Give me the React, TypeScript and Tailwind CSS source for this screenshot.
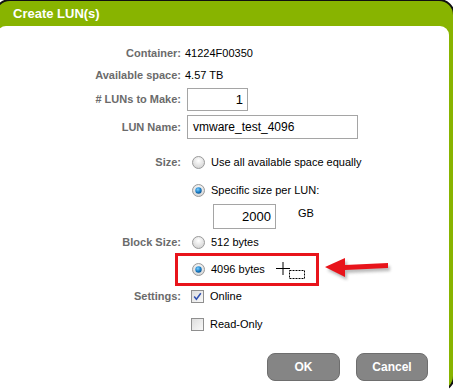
import React from "react";

function Radio({ checked }: { checked?: boolean }) {
  return (
    <svg width="13" height="13" viewBox="0 0 13 13" className="shrink-0">
      <defs>
        <radialGradient id={checked ? "rg1" : "rg0"} cx="0.5" cy="0.35" r="0.6">
          <stop offset="0" stopColor="#ffffff" />
          <stop offset="1" stopColor="#d6d6d6" />
        </radialGradient>
        <radialGradient id="dot" cx="0.4" cy="0.35" r="0.7">
          <stop offset="0" stopColor="#7fd0ff" />
          <stop offset="0.6" stopColor="#1a7fc8" />
          <stop offset="1" stopColor="#0b4f8a" />
        </radialGradient>
      </defs>
      <circle cx="6.5" cy="6.5" r="6" fill={`url(#${checked ? "rg1" : "rg0"})`} stroke="#9a9a9a" strokeWidth="1" />
      {checked && <circle cx="6.5" cy="6.5" r="3.2" fill="url(#dot)" />}
    </svg>
  );
}

function Check({ checked }: { checked?: boolean }) {
  return (
    <svg width="13" height="13" viewBox="0 0 13 13" className="shrink-0">
      <defs>
        <linearGradient id="cb" x1="0" y1="0" x2="1" y2="1">
          <stop offset="0" stopColor="#dcdcdc" />
          <stop offset="1" stopColor="#fafafa" />
        </linearGradient>
      </defs>
      <rect x="0.5" y="0.5" width="12" height="12" fill="url(#cb)" stroke="#8f8f8f" />
      {checked && (
        <path d="M3.2 6.5 L5.4 9.3 L9.8 3.2" fill="none" stroke="#3050b0" strokeWidth="1.5" />
      )}
    </svg>
  );
}

function Label({ children }: { children?: React.ReactNode }) {
  return (
    <div className="w-[184px] shrink-0 text-right font-bold text-[#6b6b6b] text-[11px]">
      {children}
    </div>
  );
}

export default function App() {
  return (
    <div
      className="w-[453px] h-[390px] overflow-hidden bg-white relative"
      style={{ fontFamily: '"Liberation Sans", Arial, sans-serif' }}
    >
      <div className="-ml-[6px] -mt-[1px] w-[461px] h-[393px] rounded-[16px] border-2 border-[#111111] bg-[#88b400] flex flex-col">
        <div className="h-[25px] shrink-0 pl-[17px] leading-[25px] text-[13px] font-bold text-white">
          Create LUN(s)
        </div>
        <div className="flex-1 ml-[1px] mr-[4px] bg-white rounded-t-[9px] flex flex-col pt-[16px] text-[11px] text-black">
          <div className="h-[22px] flex items-center">
            <Label>Container:</Label>
            <div className="ml-[4px]">41224F00350</div>
          </div>
          <div className="h-[22px] flex items-center">
            <Label>Available space:</Label>
            <div className="ml-[4px]">4.57 TB</div>
          </div>
          <div className="h-[26px] flex items-center">
            <Label>&#35; LUNs to Make:</Label>
            <div className="ml-[6px] w-[61px] h-[23px] border border-[#a5a5a5] text-right pr-[4px] text-[13px] leading-[21px]">
              1
            </div>
          </div>
          <div className="h-[30px] flex items-center">
            <Label>LUN Name:</Label>
            <div className="ml-[6px] w-[171px] h-[24px] border border-[#a5a5a5] pl-[5px] text-[12px] leading-[22px]">
              vmware_test_4096
            </div>
          </div>
          <div className="h-[40px] flex items-center">
            <Label>Size:</Label>
            <div className="ml-[11px] flex items-center gap-[6px]">
              <Radio />
              <span>Use all available space equally</span>
            </div>
          </div>
          <div className="h-[16px] flex items-center">
            <Label />
            <div className="ml-[11px] flex items-center gap-[6px]">
              <Radio checked />
              <span>Specific size per LUN:</span>
            </div>
          </div>
          <div className="h-[36px] flex items-center">
            <Label />
            <div className="ml-[32px] w-[63px] h-[25px] border border-[#a5a5a5] text-right pr-[4px] text-[13px] leading-[23px]">
              2000
            </div>
            <div className="ml-[22px] -mt-[5px]">GB</div>
          </div>
          <div className="h-[16px] flex items-center">
            <Label>Block Size:</Label>
            <div className="ml-[11px] flex items-center gap-[6px]">
              <Radio />
              <span>512 bytes</span>
            </div>
          </div>
          <div className="h-[38px] flex items-center">
            <Label />
            <div className="-ml-[6px] w-[144px] h-[33px] border-[3px] border-[#e8141b] flex items-center pl-[14px] gap-[6px] relative">
              <Radio checked />
              <span>4096 bytes</span>
              <svg width="30" height="20" viewBox="0 0 30 20" className="absolute left-[98px] top-[4px]">
                <path d="M7 2 V15 M0 8.5 H14" stroke="#000" strokeWidth="1" />
                <rect x="13.5" y="10.5" width="15" height="8" fill="none" stroke="#000" strokeDasharray="2 1" />
              </svg>
            </div>
            <svg width="70" height="30" viewBox="0 0 70 30" className="absolute left-[325px] top-[253px]">
              <defs>
                <filter id="sh" x="-20%" y="-40%" width="150%" height="200%">
                  <feGaussianBlur stdDeviation="1.5" />
                </filter>
              </defs>
              <g transform="translate(2,3)" filter="url(#sh)" opacity="0.45">
                <path d="M0 14 L20 5 L20 12 L63 10 L63 15 L20 17 L20 24 Z" fill="#666" />
              </g>
              <path d="M0 14 L20 5 L20 12 L63 10 L63 15 L20 17 L20 24 Z" fill="#e8141b" />
            </svg>
          </div>
          <div className="h-[16px] flex items-center">
            <Label>Settings:</Label>
            <div className="ml-[10px] flex items-center gap-[6px]">
              <Check checked />
              <span>Online</span>
            </div>
          </div>
          <div className="h-[40px] flex items-center">
            <Label />
            <div className="ml-[10px] flex items-center gap-[6px]">
              <Check />
              <span>Read-Only</span>
            </div>
          </div>
          <div className="flex justify-end gap-[16px] pr-[21px] mt-[9px]">
            <div className="w-[73px] h-[28px] rounded-[8px] bg-[#858585] border border-[#6e6e6e] text-white font-bold text-[12px] flex items-center justify-center">
              OK
            </div>
            <div className="w-[72px] h-[28px] rounded-[8px] bg-[#858585] border border-[#6e6e6e] text-white font-bold text-[12px] flex items-center justify-center">
              Cancel
            </div>
          </div>
        </div>
      </div>
    </div>
  );
}
